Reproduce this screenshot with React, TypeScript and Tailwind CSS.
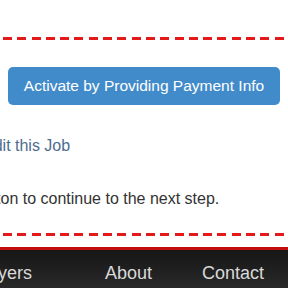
export default function App() {
  // dashed separator, drawn as a repeating gradient so the dash rhythm matches
  const dashed =
    "h-[3px] w-full bg-[repeating-linear-gradient(to_right,transparent_0_3px,#e3191b_3px_12px,transparent_12px_14.3px)]";

  return (
    <div className="w-[288px] h-[288px] overflow-hidden bg-white font-['Liberation_Sans',Arial,sans-serif]">
      <div className="pt-[37px]">
        <div className={dashed} />

        <div className="px-2 mt-[27px]">
          <button className="w-[272px] h-[38px] rounded-[5px] bg-[#428bca] text-white text-[15.5px] leading-none">
            Activate by Providing Payment Info
          </button>
        </div>

        <p className="mt-[31px] -ml-[17px] whitespace-nowrap text-[16px] leading-5 text-[#4d6d8f]">
          Edit this Job
        </p>

        <p className="mt-[33px] -ml-[92px] whitespace-nowrap text-[16px] leading-5 text-[#333333]">
          Click the button to continue to the next step.
        </p>

        <div className={dashed + " mt-[24px]"} />

        <div className="mt-[11px] h-[3px] bg-[#c40d0f]" />

        <nav className="h-[40px] bg-gradient-to-b from-[#161616] to-[#2a2a2a] pt-[12px]">
          <div className="flex whitespace-nowrap text-[18px] leading-[22px] text-[#d9d9d9]">
            <span className="-ml-[53px]">Employers</span>
            <span className="ml-[73px]">About</span>
            <span className="ml-[50px]">Contact</span>
          </div>
        </nav>
      </div>
    </div>
  );
}
